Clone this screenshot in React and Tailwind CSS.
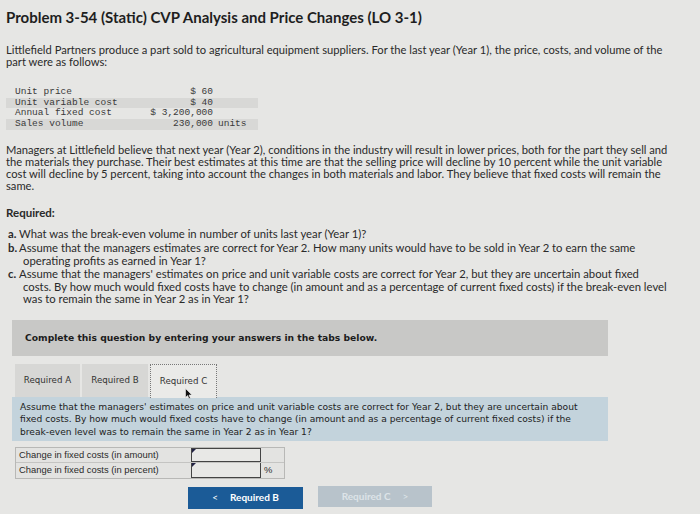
export default function App() {
  const lato = { fontFamily: "Lato, 'Open Sans', sans-serif" };
  return (
    <div className="w-[700px] h-[514px] overflow-hidden bg-[#e6e6e4] text-[#2a2a2a]" style={lato}>
      <div className="pl-[6px] pt-[8px]">
        <h1 className="text-[15px] font-bold leading-[18px] text-[#1e1e1e]">
          Problem 3-54 (Static) CVP Analysis and Price Changes (LO 3-1)
        </h1>
        <p className="mt-[18px] text-[11.2px] leading-[12px] pr-[24px]">
          Littlefield Partners produce a part sold to agricultural equipment suppliers. For the last year (Year 1), the price, costs, and volume of the part were as follows:
        </p>
        <div className="mt-[19px] w-[252px] text-[9.5px] leading-[10.7px] text-[#3a3a3a] font-['Liberation_Mono',monospace] whitespace-nowrap">
          <div className="flex pl-[9px]"><span className="w-[128px]">Unit price</span><span className="w-[70px] text-right">$ 60</span></div>
          <div className="flex pl-[9px] bg-[#d8d8d6]"><span className="w-[128px]">Unit variable cost</span><span className="w-[70px] text-right">$ 40</span></div>
          <div className="flex pl-[9px]"><span className="w-[128px]">Annual fixed cost</span><span className="w-[70px] text-right">$ 3,200,000</span></div>
          <div className="flex pl-[9px] bg-[#d8d8d6]"><span className="w-[128px]">Sales volume</span><span className="w-[70px] text-right">230,000</span><span className="pl-[5px]">units</span></div>
        </div>
        <p className="mt-[14px] text-[11.2px] leading-[12px] pr-[24px]">
          Managers at Littlefield believe that next year (Year 2), conditions in the industry will result in lower prices, both for the part they sell and the materials they purchase. Their best estimates at this time are that the selling price will decline by 10 percent while the unit variable cost will decline by 5 percent, taking into account the changes in both materials and labor. They believe that fixed costs will remain the same.
        </p>
        <div className="mt-[14px] text-[11.5px] leading-[14px] font-bold">Required:</div>
        <div className="mt-[8px] text-[11.3px] leading-[12.5px] pr-[4px] flex flex-col gap-[1px] whitespace-nowrap">
          <div className="flex mb-[1px]"><span className="w-[13px] pl-[2px] font-bold">a.</span><span className="flex-1">What was the break-even volume in number of units last year (Year 1)?</span></div>
          <div className="flex"><span className="w-[13px] pl-[2px] font-bold">b.</span><span className="flex-1">Assume that the managers estimates are correct for Year 2. How many units would have to be sold in Year 2 to earn the same<br /><span className="pl-[4px]">operating profits as earned in Year 1?</span></span></div>
          <div className="flex"><span className="w-[13px] pl-[2px] font-bold">c.</span><span className="flex-1">Assume that the managers' estimates on price and unit variable costs are correct for Year 2, but they are uncertain about fixed<br /><span className="pl-[4px]">costs. By how much would fixed costs have to change (in amount and as a percentage of current fixed costs) if the break-even level</span><br /><span className="pl-[4px]">was to remain the same in Year 2 as in Year 1?</span></span></div>
        </div>
      </div>

      <div className="ml-[12px] mt-[14px] w-[596px] h-[36px] bg-[#c8c8c6] flex items-center pl-[13px] text-[9.2px] font-bold text-[#1c1c1c] font-['DejaVu_Sans',sans-serif]">
        Complete this question by entering your answers in the tabs below.
      </div>

      <div className="ml-[15px] mt-[8px] flex gap-[2px] font-['DejaVu_Sans',sans-serif] text-[8.7px] text-[#333]">
        <div className="w-[65px] h-[33px] bg-[#d7d7d5] flex items-center justify-center">Required A</div>
        <div className="w-[66px] h-[33px] bg-[#d7d7d5] flex items-center justify-center">Required B</div>
        <div className="relative w-[67px] h-[34px] bg-[#eaeae8] border border-dotted border-[#777] border-b-0 flex items-center justify-center -mb-[1px]">
          Required C
          <svg className="absolute left-[34px] top-[23px]" width="8" height="12" viewBox="0 0 8 12">
            <path d="M0.5 0.5 L0.5 9.5 L2.6 7.5 L4 10.8 L5.4 10.2 L4 7 L7 7 Z" fill="#111" stroke="#eee" strokeWidth="0.6" />
          </svg>
        </div>
      </div>

      <div className="ml-[12px] w-[596px] h-[44px] bg-[#c3d3dc] pl-[8px] pt-[4px] text-[9.15px] leading-[12.5px] text-[#222] font-['DejaVu_Sans',sans-serif] whitespace-nowrap overflow-hidden">
        Assume that the managers' estimates on price and unit variable costs are correct for Year 2, but they are uncertain about<br />
        fixed costs. By how much would fixed costs have to change (in amount and as a percentage of current fixed costs) if the<br />
        break-even level was to remain the same in Year 2 as in Year 1?
      </div>

      <div className="ml-[15px] mt-[6px] w-[270px] border border-[#b8b8b6] text-[9.4px] text-[#2a2a2a] font-['Liberation_Sans',sans-serif]">
        <div className="flex h-[15px] border-b border-[#c4c4c2]">
          <div className="w-[175px] pl-[3px] flex items-center bg-[#e3e3e1]">Change in fixed costs (in amount)</div>
          <div className="relative w-[70px] border border-[#444] bg-[#e8e8e6]">
            <div className="absolute left-0 top-0 w-0 h-0 border-t-[4px] border-r-[4px] border-t-[#224] border-r-transparent" />
          </div>
          <div className="flex-1 bg-[#e3e3e1]" />
        </div>
        <div className="flex h-[15px]">
          <div className="w-[175px] pl-[3px] flex items-center bg-[#e3e3e1]">Change in fixed costs (in percent)</div>
          <div className="relative w-[70px] border border-[#444] border-t-0 bg-[#e8e8e6]">
            <div className="absolute left-0 top-0 w-0 h-0 border-t-[4px] border-r-[4px] border-t-[#224] border-r-transparent" />
          </div>
          <div className="flex-1 pl-[3px] flex items-center bg-[#e3e3e1]">%</div>
        </div>
      </div>

      <div className="ml-[188px] mt-[8px] flex items-start gap-[15px] text-[10px] font-bold" style={lato}>
        <div className="w-[115px] h-[22px] bg-[#1b5b97] text-white flex items-center justify-center gap-[12px]">
          <span className="font-normal">&lt;</span><span>Required B</span>
        </div>
        <div className="w-[114px] h-[21px] -mt-[1px] bg-[#b8c3cb] text-[#dde3e8] flex items-center justify-center gap-[12px]">
          <span>Required C</span><span className="font-normal">&gt;</span>
        </div>
      </div>
    </div>
  );
}
